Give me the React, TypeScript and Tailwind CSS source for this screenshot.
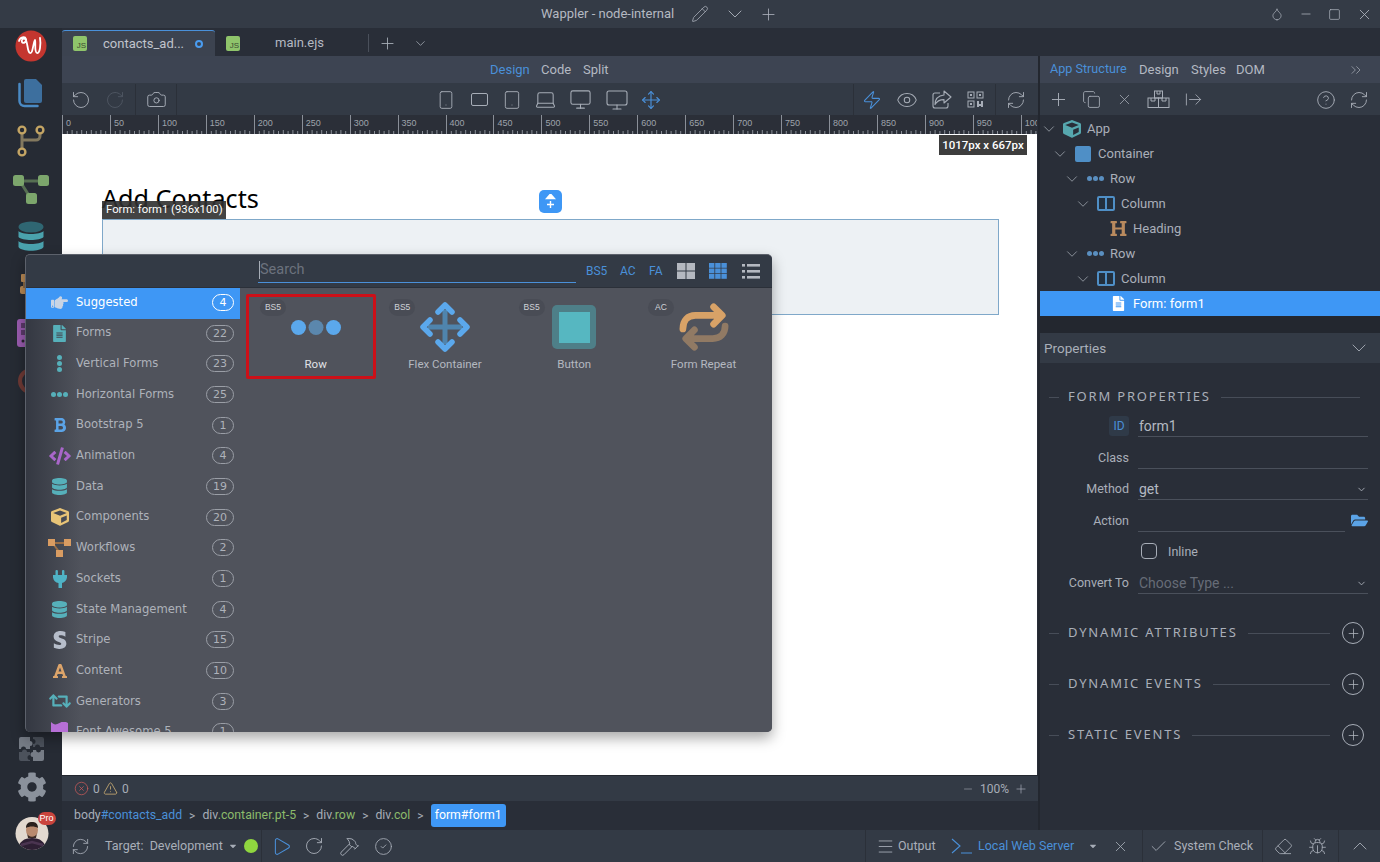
import React from "react";
import {
  RotateCcw, RotateCw, Camera, Smartphone, Tablet, Laptop, Monitor, Move, Zap, Eye, RefreshCw,
  Plus, Copy, X, CircleHelp, ChevronDown, ChevronUp, Pencil, Droplet, Minus, Square, ChevronsRight,
  ArrowRightFromLine, Hammer, CircleCheck, Play, Menu, Check, Eraser, Bug, CircleX, TriangleAlert,
} from "lucide-react";
import {
  FaHandPointRight, FaFileAlt, FaBold, FaCode, FaDatabase, FaCube, FaStripeS, FaFont, FaRetweet,
  FaHeading, FaFolderOpen, FaCog, FaCaretDown,
} from "react-icons/fa";

const ui = "font-['Roboto','Noto_Sans',sans-serif]";

function Cell({ w, children }: { w: string; children: React.ReactNode }) {
  return <div className={`${w} h-full flex items-center justify-center shrink-0`}>{children}</div>;
}

function JsIcon() {
  return (
    <div className="w-[14px] h-[15px] rounded-[2px] bg-[#8fc46b] flex items-end justify-end pr-[1px]">
      <span className="text-[8px] leading-[10px] text-[#3a4a32] font-['Liberation_Sans',sans-serif]">JS</span>
    </div>
  );
}

function Logo() {
  return (
    <svg width="32" height="32" viewBox="0 0 32 32">
      <circle cx="16" cy="16" r="15.5" fill="#c4362f" />
      <path d="M4 11c1-4 6-5 7-2s-3 5-4 3 1-4 3-3c3 2 2 13 5 14s3-10 5-13c1 3-1 12 2 13s4-9 3-15" fill="none" stroke="#fff" strokeWidth="1.8" strokeLinecap="round" strokeLinejoin="round" />
    </svg>
  );
}

function Avatar() {
  return (
    <div className="relative w-[34px] h-[33px]">
      <svg width="34" height="33" viewBox="0 0 34 33">
        <defs><clipPath id="av"><circle cx="17" cy="16.5" r="16.5" /></clipPath></defs>
        <g clipPath="url(#av)">
          <rect width="34" height="34" fill="#e2d9cf" />
          <path d="M3 34c0-9 6-13 14-13s14 4 14 13z" fill="#2d1f33" />
          <path d="M6 28l11-3 11 3" stroke="#4a3450" strokeWidth="2.5" fill="none" />
          <ellipse cx="17" cy="13" rx="6" ry="7.5" fill="#b98a6e" />
          <path d="M11 11c0-5 3-6 6-6s6 1 6 6c-3-2-9-2-12 0z" fill="#2a211d" />
          <path d="M12 16c1 5 9 5 10 0l-1 5h-8z" fill="#3a2a24" />
        </g>
      </svg>
      <span className="absolute -top-[5px] left-[23px] w-[18px] h-[13px] rounded-full bg-[#c9443d] text-white text-[9px] leading-[13px] text-center font-['Liberation_Sans',sans-serif]">Pro</span>
    </div>
  );
}

function Rail() {
  return (
    <div className="w-[62px] shrink-0 bg-[#262b34] flex flex-col items-center">
      <div className="h-[36px] flex items-center justify-center"><Logo /></div>
      <div className="h-[48px] mt-[5px] flex items-center justify-center">
        <svg width="28" height="32" viewBox="0 0 28 32">
          <path d="M2.5 7v17a5 5 0 0 0 5 5h13" fill="none" stroke="#4a8ac4" strokeWidth="2.5" strokeLinecap="round" />
          <path d="M9 2h10l6 6v16a2 2 0 0 1-2 2H9a2 2 0 0 1-2-2V4a2 2 0 0 1 2-2z" fill="#3d6f9e" />
        </svg>
      </div>
      <div className="h-[48px] flex items-center justify-center">
        <svg width="28" height="32" viewBox="0 0 28 32">
          <path d="M5 8v18M23 8v3a4 4 0 0 1-4 4H5" fill="none" stroke="#83795f" strokeWidth="3" />
          <circle cx="5" cy="5" r="3.4" fill="#262b34" stroke="#c4a564" strokeWidth="2.4" />
          <circle cx="23" cy="5" r="3.4" fill="#262b34" stroke="#c4a564" strokeWidth="2.4" />
          <circle cx="5" cy="27" r="3.4" fill="#262b34" stroke="#c4a564" strokeWidth="2.4" />
        </svg>
      </div>
      <div className="h-[48px] flex items-center justify-center">
        <svg width="38" height="32" viewBox="0 0 38 32">
          <path d="M8 8h22M9 10l9 14" fill="none" stroke="#566f52" strokeWidth="3" />
          <rect x="1" y="2" width="11" height="11" rx="2.5" fill="#7ca66c" />
          <rect x="26" y="2" width="11" height="11" rx="2.5" fill="#7ca66c" />
          <rect x="14" y="20" width="11" height="11" rx="2.5" fill="#7ca66c" />
        </svg>
      </div>
      <div className="h-[48px] flex items-center justify-center">
        <svg width="26" height="32" viewBox="0 0 26 32">
          <ellipse cx="13" cy="6" rx="12.5" ry="5.5" fill="#2f6672" />
          <path d="M.5 10c3 4 22 4 25 0v6c-3 4-22 4-25 0z" fill="#4aa2ad" />
          <path d="M.5 20c3 4 22 4 25 0v6c-3 5-22 5-25 0z" fill="#4aa2ad" />
        </svg>
      </div>
      <div className="h-[48px] flex items-center justify-center">
        <svg width="24" height="24" viewBox="0 0 24 24"><rect x="2" y="1" width="8" height="8" rx="1" fill="#b98a55" /><rect x="1" y="13" width="11" height="8" rx="2" fill="#b98a55" /><path d="M10 5h12M5 9v6" stroke="#8a6a45" strokeWidth="2" /></svg>
      </div>
      <div className="h-[48px] flex items-center justify-center">
        <svg width="30" height="30" viewBox="0 0 30 30"><rect x="1" y="1" width="16" height="28" rx="3" fill="#9a5cb0" /><rect x="5" y="5" width="5" height="5" fill="#5d3a6c" /><rect x="5" y="12" width="5" height="5" fill="#5d3a6c" /><circle cx="7" cy="23" r="1.5" fill="#2a2530" /></svg>
      </div>
      <div className="h-[48px] flex items-center justify-center">
        <svg width="30" height="30" viewBox="0 0 30 30"><circle cx="15" cy="15" r="11" fill="none" stroke="#6f3a35" strokeWidth="4" /></svg>
      </div>
      <div className="mt-auto h-[28px] flex items-center justify-center">
        <svg width="27" height="26" viewBox="0 0 27 26">
          <path d="M1 3a2 2 0 0 1 2-2h9v4a2.5 2.5 0 0 1 0 5v3H8a2.5 2.5 0 0 0-5 0H1z" fill="#767c86" />
          <path d="M15 1h9a2 2 0 0 1 2 2v8h-4a2.5 2.5 0 0 0-5 0h-2V8a2.5 2.5 0 0 0 0-5z" fill="#4c525c" />
          <path d="M1 16h3a2.5 2.5 0 0 1 5 0h3v3a2.5 2.5 0 0 0 0 5v1H3a2 2 0 0 1-2-2z" fill="#4c525c" />
          <path d="M15 14h3a2.5 2.5 0 0 0 5 0h3v9a2 2 0 0 1-2 2h-9v-4a2.5 2.5 0 0 1 0-5z" fill="#767c86" />
        </svg>
      </div>
      <div className="h-[50px] flex items-center justify-center pb-[3px] pl-[1px]"><FaCog size={30} color="#8a919b" /></div>
      <div className="h-[49px] flex items-center justify-center pl-[1px] pb-[8px]"><Avatar /></div>
    </div>
  );
}

function TitleBar() {
  const c = "#b0b6c0";
  return (
    <div className="h-[28px] bg-[#343b46] flex items-center shrink-0 text-[#b4b9c2]">
      <div className="w-[541px] shrink-0" />
      <span className="text-[13px] w-[146px] whitespace-nowrap">Wappler - node-internal</span>
      <Cell w="w-[26px]"><Pencil size={18} strokeWidth={1} color={c} /></Cell>
      <Cell w="w-[44px]"><ChevronDown size={24} strokeWidth={0.9} color={c} /></Cell>
      <Cell w="w-[22px]"><Plus size={19} strokeWidth={1} color={c} /></Cell>
      <div className="flex-1" />
      <Cell w="w-[28px]"><Droplet size={14} strokeWidth={1.2} color={c} /></Cell>
      <Cell w="w-[29px]"><Minus size={14} strokeWidth={1.3} color={c} /></Cell>
      <Cell w="w-[29px]"><Square size={13} strokeWidth={1.3} color={c} /></Cell>
      <Cell w="w-[31px]"><X size={17} strokeWidth={1.2} color={c} /></Cell>
    </div>
  );
}

function TabsBar() {
  return (
    <div className="h-[28px] bg-[#292e38] flex items-end shrink-0 text-[13px] text-[#b4b9c2]">
      <div className="w-[153px] h-[26px] bg-[#3c4350] border-t border-[#4a90d9] rounded-t-[3px] flex items-center pl-[11px]">
        <JsIcon />
        <span className="ml-[16px] w-[92px] text-[#c0c4cc]">contacts_ad...</span>
        <span className="w-[8px] h-[8px] rounded-full border-2 border-[#4a9cf0]" />
      </div>
      <div className="w-[153px] h-[26px] flex items-center pl-[11px]">
        <JsIcon />
        <span className="ml-[35px]">main.ejs</span>
      </div>
      <div className="h-[26px] flex items-center">
        <div className="w-px h-[18px] bg-[#4a505b]" />
        <Cell w="w-[37px]"><Plus size={19} strokeWidth={1.1} color="#aab0ba" /></Cell>
        <Cell w="w-[29px]"><ChevronDown size={15} strokeWidth={1.2} color="#aab0ba" /></Cell>
      </div>
    </div>
  );
}

function SubTabs() {
  return (
    <div className="h-[28px] bg-[#3d4452] flex items-center shrink-0 text-[13px] text-[#b4b9c2] pl-[428px] border-b border-[#333a45]">
      <span className="text-[#4a90d9] w-[51px]">Design</span>
      <span className="w-[42px]">Code</span>
      <span>Split</span>
    </div>
  );
}

function CenterToolbar() {
  const c = "#a7adb7";
  const s = 1.1;
  return (
    <div className="h-[31px] bg-[#333a45] flex items-center shrink-0">
      <div className="w-[2px]" />
      <Cell w="w-[34px]"><RotateCcw size={20} strokeWidth={s} color={c} /></Cell>
      <Cell w="w-[34px]"><RotateCw size={20} strokeWidth={s} color="#4f5662" /></Cell>
      <div className="w-[3px]" />
      <div className="w-px h-full bg-[#2b3039]" />
      <Cell w="w-[40px]"><Camera size={21} strokeWidth={s} color={c} /></Cell>
      <div className="w-px h-full bg-[#2b3039]" />
      <div className="w-[252px]" />
      <Cell w="w-[34px]"><Smartphone size={20} strokeWidth={s} color={c} /></Cell>
      <Cell w="w-[32px]"><div className="w-[17px] h-[13px] border border-[#a7adb7] rounded-[2px]" /></Cell>
      <Cell w="w-[33px]"><Tablet size={20} strokeWidth={s} color={c} /></Cell>
      <Cell w="w-[34px]"><Laptop size={23} strokeWidth={s} color={c} /></Cell>
      <Cell w="w-[37px]"><Monitor size={23} strokeWidth={s} color={c} /></Cell>
      <Cell w="w-[35px]"><Monitor size={24} strokeWidth={s} color={c} /></Cell>
      <Cell w="w-[34px]"><Move size={20} strokeWidth={1.4} color="#4a90d9" /></Cell>
      <div className="flex-1" />
      <div className="w-px h-full bg-[#2b3039]" />
      <Cell w="w-[36px]"><Zap size={20} strokeWidth={1.3} color="#4a90d9" /></Cell>
      <Cell w="w-[34px]"><Eye size={22} strokeWidth={s} color={c} /></Cell>
      <Cell w="w-[34px]">
        <svg width="21" height="21" viewBox="0 0 21 21" fill="none" stroke={c} strokeWidth="1.1" strokeLinejoin="round">
          <path d="M9 4H4a2 2 0 0 0-2 2v11a2 2 0 0 0 2 2h11a2 2 0 0 0 2-2v-3" />
          <path d="M13 2l7 6-7 6v-3.4c-4 0-7 1-9 5 0-6 4-9 9-9.6z" />
        </svg>
      </Cell>
      <Cell w="w-[34px]">
        <svg width="17" height="17" viewBox="0 0 17 17" fill="none" stroke={c}>
          <rect x="1" y="1" width="6" height="6" /><rect x="10" y="1" width="6" height="6" /><rect x="1" y="10" width="6" height="6" />
          <rect x="3" y="3" width="2" height="2" fill={c} stroke="none" /><rect x="12" y="3" width="2" height="2" fill={c} stroke="none" /><rect x="3" y="12" width="2" height="2" fill={c} stroke="none" />
          <path d="M10 10h2v3h2v-3h2v6h-2v-1h-2v1h-2z" fill={c} stroke="none" />
        </svg>
      </Cell>
      <div className="w-[3px]" />
      <div className="w-px h-full bg-[#2b3039]" />
      <Cell w="w-[40px]"><RefreshCw size={20} strokeWidth={s} color={c} /></Cell>
      <div className="w-[2px]" />
    </div>
  );
}

function Ruler() {
  const labels = Array.from({ length: 21 }, (_, i) => i * 50);
  return (
    <div className="h-[19px] bg-[#2b2f38] flex overflow-hidden shrink-0 mr-[1px]">
      {labels.map((n) => (
        <div key={n} className="w-[47.95px] shrink-0 border-l border-[#8a8f98] flex flex-col justify-between pl-[3px] box-border">
          <span className="text-[9px] leading-[12px] mt-[2px] text-[#9ea3ab] font-['Liberation_Sans',sans-serif]">{n === 1000 ? "100" : n}</span>
          <svg width="45" height="4" viewBox="0 0 45 4" className="-ml-[3px] block">
            {Array.from({ length: 10 }, (_, i) => (
              <line key={i} x1={i * 4.8 - 0.5} x2={i * 4.8 - 0.5} y1={i % 2 ? 1 : 0} y2={4} stroke="#8a8f98" strokeWidth="1" />
            ))}
          </svg>
        </div>
      ))}
    </div>
  );
}

function Canvas() {
  return (
    <div className="flex-1 relative bg-white pt-[49px] pl-[40px] mr-[1px]">
      <h1 className="text-[25.2px] leading-[31px] text-black h-[36px] whitespace-nowrap font-['Noto_Sans','Open_Sans',sans-serif]">Add Contacts</h1>
      <div className="w-[897px] h-[96px] bg-[#edf1f4] border border-[#7fa8c9]" />
      <div className="absolute left-[40px] top-[67px] h-[18px] w-[124px] bg-[#2f2f2fe6] text-white text-[11.3px] leading-[18px] pl-[4px] whitespace-nowrap">Form: form1 (936x100)</div>
      <div className="absolute left-[477px] top-[56px] w-[23px] h-[23px] rounded-[5px] bg-[#3e97f5] flex items-center justify-center">
        <svg width="11" height="15" viewBox="0 0 11 15"><path d="M5.5 0l4 4.5h-8z M5.5 7v7M2 10.5h7" fill="#fff" stroke="#fff" strokeWidth="1.4" /></svg>
      </div>
      <div className="absolute right-[10px] top-[1px] h-[20px] w-[88px] bg-[#3d3d3d] text-white text-[11.5px] leading-[20px] text-center font-medium whitespace-nowrap">1017px x 667px</div>
    </div>
  );
}

function StatusBar() {
  return (
    <div className="h-[26px] bg-[#333a45] flex items-center shrink-0 text-[12px] text-[#a7adb7] border-t border-[#23272f]">
      <div className="w-[12px]" />
      <CircleX size={15} strokeWidth={1.2} color="#c75a5a" />
      <span className="ml-[4px] w-[10px]">0</span>
      <TriangleAlert size={15} strokeWidth={1.2} color="#d9b878" />
      <span className="ml-[4px]">0</span>
      <div className="flex-1" />
      <Minus size={12} strokeWidth={1.2} color="#a7adb7" />
      <span className="ml-[6px] w-[34px]">100%</span>
      <Plus size={14} strokeWidth={1.2} color="#a7adb7" />
      <div className="w-[10px]" />
    </div>
  );
}

function Crumbs() {
  const sep = <span className="mx-[7px] text-[#a7adb7] text-[12px]">&gt;</span>;
  return (
    <div className="h-[29px] bg-[#292e38] flex items-center shrink-0 text-[12.3px] text-[#a7adb7] pl-[12px]">
      <span>body<span className="text-[#4a90d9]">#contacts_add</span></span>
      {sep}
      <span>div<span className="text-[#8cbb6b]">.container.pt-5</span></span>
      {sep}
      <span>div<span className="text-[#8cbb6b]">.row</span></span>
      {sep}
      <span>div<span className="text-[#8cbb6b]">.col</span></span>
      {sep}
      <span className="h-[23px] px-[4px] rounded-[3px] bg-[#3e97f5] text-white leading-[23px]">form#form1</span>
    </div>
  );
}

function TreeRow({ pl, icon, label, chev = true, selected = false, }: { pl: string; icon: React.ReactNode; label: string; chev?: boolean; selected?: boolean }) {
  return (
    <div className={`h-[25px] flex items-center ${pl} text-[13px] ${selected ? "bg-[#3e97f5] text-white" : "text-[#a9afb9]"}`}>
      <div className="w-[12px] flex justify-center">{chev && <ChevronDown size={18} strokeWidth={1} color="#a7adb7" className="shrink-0" />}</div>
      <div className="w-[22px] ml-[6px] flex justify-center">{icon}</div>
      <span className="ml-[4px]">{label}</span>
    </div>
  );
}

function Dots({ color = "#5a8fc0", size = 5 }: { color?: string; size?: number }) {
  return (
    <svg width={size * 3 + 2} height={size} viewBox="0 0 17 5">
      <circle cx="2.5" cy="2.5" r="2.5" fill={color} />
      <circle cx="8.5" cy="2.5" r="2.5" fill={color} />
      <circle cx="14.5" cy="2.5" r="2.5" fill={color} />
    </svg>
  );
}

function ColIcon() {
  return (
    <div className="w-[18px] h-[15px] border-2 border-[#4f8fc6] rounded-[2px] flex justify-center bg-[#23303e]">
      <div className="w-[2px] h-full bg-[#4f8fc6]" />
    </div>
  );
}

function SectionTitle({ label, long = false }: { label: string; long?: boolean }) {
  return (
    <div className="h-[30px] flex items-center pl-[9px] text-[13px] tracking-[0.14em] text-[#a9afb9] font-['Noto_Sans',sans-serif]">
      <div className="w-[10px] h-px bg-[#474d58]" />
      <span className="ml-[9px] whitespace-nowrap">{label}</span>
      <div className={`ml-[10px] h-px bg-[#474d58] flex-1 ${long ? "mr-[20px]" : ""}`} />
      {!long && (
        <div className="ml-[12px] mr-[16px] w-[22px] h-[22px] rounded-full border border-[#a7adb7] flex items-center justify-center">
          <Plus size={15} strokeWidth={1.2} color="#b4b9c2" />
        </div>
      )}
    </div>
  );
}

function FieldRow({ h, label, children }: { h: string; label: React.ReactNode; children: React.ReactNode }) {
  return (
    <div className={`${h} flex items-end text-[12.5px]`}>
      <div className="w-[89px] h-[22px] flex items-center justify-end text-[#a9afb9]">{label}</div>
      <div className="ml-[9px] flex-1 mr-[12px] h-[24px] pt-[3px] flex items-center justify-between border-b border-[#4a505b] text-[14px] text-[#b4b9c2] pl-px">
        {children}
      </div>
    </div>
  );
}

function RightPanel() {
  const c = "#a7adb7";
  const s = 1.1;
  return (
    <div className="w-[342px] shrink-0 bg-[#292e38] flex flex-col border-l-2 border-[#23272f]">
      <div className="h-[28px] bg-[#3d4452] flex items-center text-[13px] text-[#b4b9c2] pl-[10px] shrink-0 border-b border-[#333a45]">
        <span className="text-[#4a90d9] w-[89px] text-[12.6px]">App Structure</span>
        <span className="w-[52px]">Design</span>
        <span className="w-[45px]">Styles</span>
        <span>DOM</span>
        <div className="flex-1" />
        <ChevronsRight size={16} strokeWidth={1.1} color={c} />
        <div className="w-[16px]" />
      </div>
      <div className="h-[31px] bg-[#333a45] flex items-center shrink-0 pl-[2px]">
        <Cell w="w-[33px]"><Plus size={21} strokeWidth={s} color={c} /></Cell>
        <Cell w="w-[33px]"><Copy size={19} strokeWidth={s} color={c} /></Cell>
        <Cell w="w-[32px]"><X size={17} strokeWidth={s} color={c} /></Cell>
        <Cell w="w-[37px]">
          <svg width="23" height="19" viewBox="0 0 23 19" fill="none" stroke={c} strokeWidth="1">
            <rect x="7.5" y="1" width="8" height="7" /><rect x="1" y="8" width="10.5" height="9.5" /><rect x="11.5" y="8" width="10.5" height="9.5" />
            <path d="M10 1v3h3V1M4 8v3h4V8M15 8v3h4V8" />
          </svg>
        </Cell>
        <Cell w="w-[32px]"><ArrowRightFromLine size={19} strokeWidth={s} color={c} /></Cell>
        <div className="flex-1" />
        <Cell w="w-[33px]"><CircleHelp size={20} strokeWidth={s} color={c} /></Cell>
        <Cell w="w-[33px]"><RefreshCw size={20} strokeWidth={s} color={c} /></Cell>
        <div className="w-[5px]" />
      </div>
      <div className="h-[201px] shrink-0 pt-[1px]">
        <TreeRow pl="pl-[3px]" label="App" icon={<FaCube size={18} color="#56a7ae" />} />
        <TreeRow pl="pl-[14px]" label="Container" icon={<div className="w-[16px] h-[16px] rounded-[2px] bg-[#4f8fc6]" />} />
        <TreeRow pl="pl-[26px]" label="Row" icon={<Dots />} />
        <TreeRow pl="pl-[37px]" label="Column" icon={<ColIcon />} />
        <TreeRow pl="pl-[49px]" chev={false} label="Heading" icon={<FaHeading size={17} color="#b98a5e" />} />
        <TreeRow pl="pl-[26px]" label="Row" icon={<Dots />} />
        <TreeRow pl="pl-[37px]" label="Column" icon={<ColIcon />} />
        <TreeRow pl="pl-[49px]" chev={false} selected label="Form: form1" icon={<FaFileAlt size={15} color="#fff" />} />
      </div>
      <div className="h-[17px] shrink-0 bg-[#23272f]" />
      <div className="h-[30px] bg-[#333a45] flex items-center justify-between pl-[4px] pr-[11px] text-[13.5px] text-[#a9afb9] shrink-0">
        <span>Properties</span>
        <ChevronDown size={24} strokeWidth={0.9} color={c} className="-mr-[2px]" />
      </div>
      <div className="mt-[19px]">
        <SectionTitle label="FORM PROPERTIES" long />
      </div>
      <div className="-mt-[3px]">
        <FieldRow h="h-[28px]" label={<span className="w-[20px] h-[20px] rounded-[3px] bg-[#2f3a48] text-[#4a90d9] text-[12px] leading-[20px] text-center">ID</span>}>
          <span>form1</span>
        </FieldRow>
        <FieldRow h="h-[32px]" label="Class"><span /></FieldRow>
        <FieldRow h="h-[31px]" label="Method">
          <span>get</span><ChevronDown size={11} strokeWidth={2} color={c} className="mr-px" />
        </FieldRow>
        <div className="h-[32px] flex items-end text-[12.5px] relative">
          <div className="w-[89px] h-[22px] flex items-center justify-end text-[#a9afb9]">Action</div>
          <div className="ml-[9px] w-[207px] h-[24px] border-b border-[#4a505b]" />
          <div className="ml-[6px] h-[24px] flex items-center"><FaFolderOpen size={17} color="#5ba3e6" /></div>
        </div>
        <div className="h-[38px] flex items-center pl-[101px] text-[12.5px] text-[#a9afb9]">
          <div className="w-[16px] h-[16px] rounded-[4px] border border-[#a7adb7]" />
          <span className="ml-[11px] mt-[2px]">Inline</span>
        </div>
        <div className="h-[24px] flex items-end text-[12.5px]">
          <div className="w-[89px] h-[22px] flex items-center justify-end text-[#a9afb9]">Convert To</div>
          <div className="ml-[9px] flex-1 mr-[12px] h-[24px] pt-[3px] flex items-center justify-between border-b border-[#4a505b] text-[14px] text-[#666c77] pl-px">
            <span>Choose Type ...</span><ChevronDown size={11} strokeWidth={2} color={c} className="mr-px" />
          </div>
        </div>
      </div>
      <div className="mt-[24px]"><SectionTitle label="DYNAMIC ATTRIBUTES" /></div>
      <div className="mt-[21px]"><SectionTitle label="DYNAMIC EVENTS" /></div>
      <div className="mt-[21px]"><SectionTitle label="STATIC EVENTS" /></div>
    </div>
  );
}

function BottomBar() {
  const c = "#a7adb7";
  const s = 1.1;
  const d = <div className="w-px h-full bg-[#2b3039]" />;
  return (
    <div className="h-[32px] bg-[#333a45] flex items-center shrink-0 text-[12.5px] text-[#a9afb9]">
      <Cell w="w-[36px]"><RefreshCw size={19} strokeWidth={s} color={c} /></Cell>
      <div className="w-[7px]" />
      <span className="w-[123px] whitespace-nowrap">Target:&nbsp; Development</span>
      <FaCaretDown size={10} color={c} />
      <div className="w-[14px] h-[14px] rounded-full bg-[#8fd63f] ml-[6px]" />
      <div className="w-[3px]" />
      {d}
      <Cell w="w-[38px]"><Play size={21} strokeWidth={1.2} color="#4a90d9" /></Cell>
      <Cell w="w-[28px]"><RotateCw size={20} strokeWidth={s} color={c} /></Cell>
      <Cell w="w-[42px]"><Hammer size={21} strokeWidth={s} color={c} /></Cell>
      <Cell w="w-[27px]"><CircleCheck size={19} strokeWidth={s} color={c} /></Cell>
      <div className="flex-1" />
      {d}
      <Cell w="w-[38px]"><Menu size={19} strokeWidth={1.1} color={c} /></Cell>
      <span className="w-[48px] -ml-[6px] mr-[5px]">Output</span>
      <svg width="22" height="16" viewBox="0 0 22 16" fill="none" stroke="#4a90d9" strokeWidth="1.1"><path d="M1 1l8 7-8 7M10 15h11" /></svg>
      <span className="ml-[5px] text-[#4a90d9] w-[110px] whitespace-nowrap">Local Web Server</span>
      <FaCaretDown size={10} color={c} />
      <Cell w="w-[44px]"><X size={17} strokeWidth={1.2} color={c} /></Cell>
      {d}
      <Cell w="w-[31px]"><Check size={19} strokeWidth={1.1} color={c} /></Cell>
      <span className="w-[88px] whitespace-nowrap">System Check</span>
      {d}
      <Cell w="w-[40px]"><Eraser size={19} strokeWidth={s} color={c} /></Cell>
      <Cell w="w-[28px]"><Bug size={19} strokeWidth={s} color={c} /></Cell>
      <div className="w-[7px]" />
      {d}
      <Cell w="w-[41px]"><ChevronUp size={24} strokeWidth={0.9} color={c} /></Cell>
    </div>
  );
}

const teal = "#56b0ba";
const cats: { label: string; n: number; icon: React.ReactNode }[] = [
  { label: "Suggested", n: 4, icon: <FaHandPointRight size={17} color="#c9d4e4" /> },
  { label: "Forms", n: 22, icon: <FaFileAlt size={17} color={teal} /> },
  { label: "Vertical Forms", n: 23, icon: <div className="rotate-90"><Dots color={teal} size={5} /></div> },
  { label: "Horizontal Forms", n: 25, icon: <Dots color={teal} size={5} /> },
  { label: "Bootstrap 5", n: 1, icon: <FaBold size={16} color="#5ba3e6" /> },
  { label: "Animation", n: 4, icon: <FaCode size={22} color="#a866c9" /> },
  { label: "Data", n: 19, icon: <FaDatabase size={17} color={teal} /> },
  { label: "Components", n: 20, icon: <FaCube size={18} color="#e8c477" /> },
  {
    label: "Workflows", n: 2, icon: (
      <svg width="23" height="18" viewBox="0 0 23 18">
        <path d="M5 4h14M6 6l6 8" stroke="#9a6e46" strokeWidth="2" />
        <rect x="0" y="0" width="7" height="7" fill="#d99c62" /><rect x="16" y="0" width="7" height="7" fill="#d99c62" /><rect x="8" y="11" width="7" height="7" fill="#d99c62" />
      </svg>
    ),
  },
  {
    label: "Sockets", n: 1, icon: (
      <svg width="14" height="18" viewBox="0 0 14 18" fill="#4fb3c6">
        <rect x="2.5" y="0" width="2.4" height="6" rx="1" /><rect x="9" y="0" width="2.4" height="6" rx="1" />
        <path d="M0 5h14v2.5a7 7 0 0 1-5 5.6V18H5.5v-4.9A7 7 0 0 1 0 7.5z" />
      </svg>
    ),
  },
  { label: "State Management", n: 4, icon: <FaDatabase size={17} color={teal} /> },
  { label: "Stripe", n: 15, icon: <FaStripeS size={18} color="#b6bdca" /> },
  { label: "Content", n: 10, icon: <FaFont size={16} color="#dca46a" /> },
  { label: "Generators", n: 3, icon: <FaRetweet size={22} color={teal} /> },
  {
    label: "Font Awesome 5", n: 1, icon: (
      <svg width="17" height="16" viewBox="0 0 17 16" fill="#b66fd6" className="-mt-[3px]"><path d="M0 0c3 3 5 3 8.5 1s5-2 8.5 0v15H0z" /></svg>
    ),
  },
];

function Sidebar() {
  return (
    <div className="w-[214px] shrink-0 h-[444px] overflow-hidden font-['DejaVu_Sans',sans-serif]">
      {cats.map((it, i) => (
        <div key={it.label} className={`h-[30.7px] flex items-center pr-[6px] pb-[2px] text-[11.6px] ${i === 0 ? "bg-[#3e97f5] text-white font-medium" : "text-[#aeb2ba]"}`}>
          <div className="w-[23px] ml-[22px] flex justify-center shrink-0">{it.icon}</div>
          <span className="flex-1 ml-[5px] whitespace-nowrap">{it.label}</span>
          <span className={`h-[17px] px-[6px] min-w-[22px] rounded-full border text-[11px] leading-[15px] text-center ${i === 0 ? "border-white text-white" : "border-[#9a9ea6] text-[#aeb2ba]"}`}>{it.n}</span>
        </div>
      ))}
    </div>
  );
}

function Card({ badge, label, icon, bright = false }: { badge: string; label: string; icon: React.ReactNode; bright?: boolean }) {
  return (
    <div className="relative h-[85px] w-[129.3px] shrink-0 flex flex-col items-center pt-[10px]">
      <span className="absolute left-[9px] top-[8px] h-[17px] w-[26px] rounded-full bg-[#494c55] text-[8.5px] leading-[17px] text-center text-[#d0d3d8] font-['Liberation_Sans',sans-serif]">{badge}</span>
      <div className="h-[52px] flex items-center justify-center">{icon}</div>
      <span className={`text-[11.5px] leading-[16px] mt-[3px] whitespace-nowrap ${bright ? "text-[#e0e2e6]" : "text-[#b4b8c0]"}`}>{label}</span>
    </div>
  );
}

function Popup() {
  return (
    <div className="absolute left-[25px] top-[254px] w-[747px] h-[478px] rounded-[5px] overflow-hidden border-l border-t border-[#5c616b] bg-[#50535c] flex flex-col shadow-[0_6px_14px_rgba(0,0,0,0.35)]">
      <div className="h-[33px] shrink-0 bg-[#333a45] flex items-center border-b border-[#2b3039]">
        <div className="ml-[232px] w-[318px] h-[23px] border-b border-[#4a90d9] flex items-center pl-[1px] pb-[2px]">
          <div className="w-px h-[18px] bg-[#a7adb7]" />
          <span className="text-[14.5px] text-[#6c727d]">Search</span>
        </div>
        <div className="ml-[10px] flex items-center text-[12px] text-[#4a90d9] pb-[1px]">
          <span className="w-[34px]">BS5</span>
          <span className="w-[29px]">AC</span>
          <span className="w-[28px]">FA</span>
        </div>
        <svg width="18" height="16" viewBox="0 0 18 16" fill="#b4b8c0"><rect width="8.5" height="7.5" /><rect x="9.5" width="8.5" height="7.5" /><rect y="8.5" width="8.5" height="7.5" /><rect x="9.5" y="8.5" width="8.5" height="7.5" /></svg>
        <svg className="ml-[14px]" width="18" height="16" viewBox="0 0 18 16" fill="#4a90d9">
          {[0, 5.5, 11].map((y) => [0, 6.2, 12.4].map((x) => <rect key={`${x}-${y}`} x={x} y={y} width="5.4" height="4.8" />))}
        </svg>
        <svg className="ml-[15px]" width="18" height="16" viewBox="0 0 18 16" fill="#b4b8c0">
          {[1, 7, 13].map((y) => <g key={y}><rect x="0" y={y} width="3" height="2.6" /><rect x="5" y={y} width="13" height="2.6" /></g>)}
        </svg>
      </div>
      <div className="flex-1 min-h-0 flex relative bg-[linear-gradient(90deg,#343842_0px,#50535c_55px)]">
        <Sidebar />
        <div className="flex pt-[3px] pl-[11px] items-start">
          <Card bright badge="BS5" label="Row" icon={
            <svg width="50" height="15" viewBox="0 0 50 15"><circle cx="7.5" cy="7.5" r="7.5" fill="#5ba8ec" /><circle cx="25" cy="7.5" r="7.5" fill="#5b87ad" /><circle cx="42.5" cy="7.5" r="7.5" fill="#5ba8ec" /></svg>
          } />
          <Card badge="BS5" label="Flex Container" icon={
            <svg width="50" height="50" viewBox="0 0 50 50">
              <path d="M25 8v34M8 25h34" stroke="#4f84ad" strokeWidth="5" />
              <path d="M18 10l7-7 7 7M18 40l7 7 7-7M10 18l-7 7 7 7M40 18l7 7-7 7" fill="none" stroke="#5ba8ec" strokeWidth="5.5" strokeLinecap="round" strokeLinejoin="round" />
            </svg>
          } />
          <Card badge="BS5" label="Button" icon={
            <div className="w-[44px] h-[44px] rounded-[5px] bg-[#4e7f88] flex items-center justify-center"><div className="w-[31px] h-[31px] bg-[#56b7c1]" /></div>
          } />
          <Card badge="AC" label="Form Repeat" icon={
            <svg width="50" height="48" viewBox="0 0 52 50" fill="none" strokeWidth="7" strokeLinecap="round" strokeLinejoin="round">
              <path d="M36 4l9 9-9 9M44 13H17C9 13 4 18 4 27" stroke="#d8a267" />
              <path d="M16 46l-9-9 9-9M8 37h27c8 0 13-5 13-13" stroke="#917a64" />
            </svg>
          } />
        </div>
        <div className="absolute left-[220px] top-[6px] w-[130px] h-[85px] border-[3px] border-[#cc1018] rounded-[2px]" />
      </div>
    </div>
  );
}

export default function App() {
  return (
    <div className={`relative w-[1380px] h-[862px] overflow-hidden flex flex-col bg-[#292e38] ${ui}`}>
      <TitleBar />
      <div className="flex-1 min-h-0 flex">
        <Rail />
        <div className="flex-1 min-w-0 flex flex-col">
          <div className="flex-1 min-h-0 flex">
            <div className="flex-1 min-w-0 flex flex-col">
              <TabsBar />
              <SubTabs />
              <CenterToolbar />
              <Ruler />
              <Canvas />
              <StatusBar />
              <Crumbs />
            </div>
            <div className="flex flex-col">
              <div className="h-[28px] bg-[#292e38]" />
              <div className="flex-1 min-h-0 flex"><RightPanel /></div>
            </div>
          </div>
          <BottomBar />
        </div>
      </div>
      <Popup />
    </div>
  );
}
